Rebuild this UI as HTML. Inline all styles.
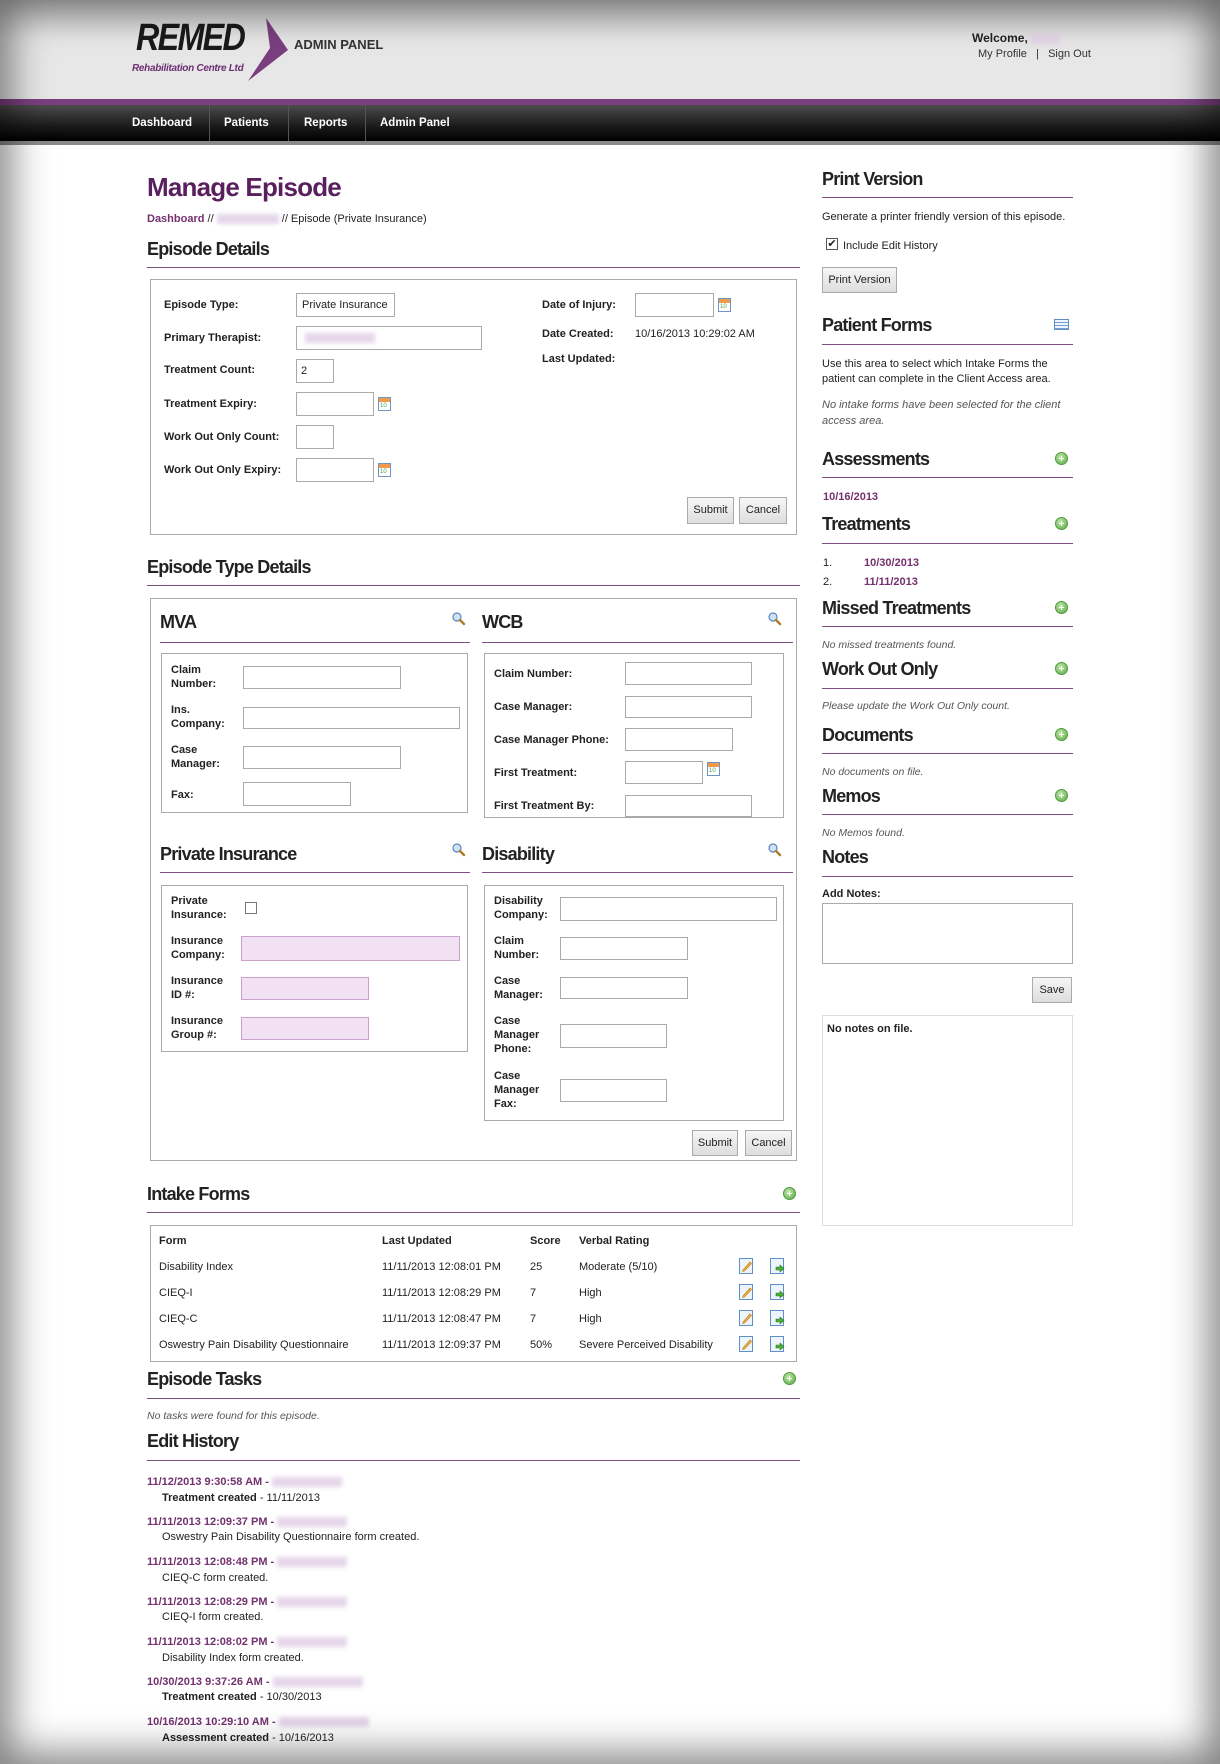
<!DOCTYPE html>
<html><head><meta charset="utf-8"><style>
*{margin:0;padding:0;box-sizing:border-box}
body{width:1220px;height:1764px;position:relative;overflow:hidden;background:#fff;font-family:"Liberation Sans",Arial,sans-serif;font-size:11px;color:#222}
.a{position:absolute}
.t{position:absolute;white-space:nowrap;line-height:14px}
.b{font-weight:bold}
.h{position:absolute;white-space:nowrap;font-family:"Liberation Sans",Arial,sans-serif;font-weight:bold;font-size:18px;letter-spacing:-0.8px;line-height:22px;color:#222}
.ln{position:absolute;height:1px;background:#7e4d82}
.in{position:absolute;border:1px solid #aaa;background:#fff}
.pk{background:#f2e1f2;border-color:#c8a2c8}
.box{position:absolute;border:1px solid #aaa}
.btn{position:absolute;border:1px solid #aaa;background:linear-gradient(#f6f6f6,#dedede);text-align:center;font-size:11px;line-height:24px}
.pu{color:#74306f;font-weight:bold}
.it{font-style:italic;color:#555}
.blur{display:inline-block;background:#e6d6ea;filter:blur(2px);height:10px;vertical-align:middle}
.plus{position:absolute;width:13px;height:13px;border-radius:50%;background:radial-gradient(circle at 40% 35%,#bfe7a8,#5aaa45);border:1px solid #4f9a3c}
.plus:before{content:"";position:absolute;left:3px;top:5px;width:5px;height:1px;background:#fff}
.plus:after{content:"";position:absolute;left:5px;top:3px;width:1px;height:5px;background:#fff}
.cal{position:absolute;width:13px;height:14px;border:1px solid #6f95c6;background:#fff}
.cal:before{content:"";position:absolute;left:0;top:0;right:0;height:4px;background:#f09a4a}
.cal:after{content:"10";position:absolute;left:1px;top:4px;font-size:6px;color:#4a9a4a;line-height:8px}
</style></head><body>
<!-- header -->
<div class="a" style="left:0;top:0;width:1220px;height:99px;background:linear-gradient(#d0d0d0,#e8e7e8 40%,#e8e7e8)"></div>
<div class="a" style="left:0;top:99px;width:1220px;height:6px;background:#7b3f80"></div>
<div class="a" style="left:0;top:105px;width:1220px;height:36px;background:linear-gradient(#4c4c4c,#1a1a1a 60%,#000)"></div>
<div class="a" style="left:0;top:141px;width:1220px;height:4px;background:#8a8a8a"></div>
<div class="t" style="left:136px;top:18px;font-family:'Liberation Sans',sans-serif;font-style:italic;font-weight:bold;font-size:38px;line-height:40px;letter-spacing:-2px;color:#1a1a1a;transform:scaleX(0.85);transform-origin:left">REMED</div>
<div class="t" style="left:132px;top:62px;font-family:'Liberation Sans',sans-serif;font-style:italic;font-weight:bold;font-size:10px;color:#6d2f72;letter-spacing:-0.3px">Rehabilitation Centre Ltd</div>
<svg class="a" style="left:248px;top:18px" width="42" height="64"><polygon points="18,0 40,32 0,63 22,30" fill="#7b3f80"/></svg>
<div class="t" style="left:294px;top:38px;font-family:'Liberation Sans',sans-serif;font-weight:bold;font-size:13px;color:#333">ADMIN PANEL</div>
<div class="t b" style="left:972px;top:31px;font-size:12px;color:#222">Welcome, <span class="blur" style="width:28px"></span></div>
<div class="t" style="left:978px;top:47px;font-size:11px;color:#333">My Profile &nbsp;&nbsp;|&nbsp;&nbsp; Sign Out</div>
<div class="t b" style="left:132px;top:116px;color:#fff;font-size:11.5px">Dashboard</div>
<div class="a" style="left:209px;top:105px;width:1px;height:36px;background:#555"></div>
<div class="t b" style="left:224px;top:116px;color:#fff;font-size:11.5px">Patients</div>
<div class="a" style="left:288px;top:105px;width:1px;height:36px;background:#555"></div>
<div class="t b" style="left:304px;top:116px;color:#fff;font-size:11.5px">Reports</div>
<div class="a" style="left:365px;top:105px;width:1px;height:36px;background:#555"></div>
<div class="t b" style="left:380px;top:116px;color:#fff;font-size:11.5px">Admin Panel</div>

<!-- left column -->
<div class="t" style="left:147px;top:171px;font-family:'Liberation Sans',sans-serif;font-weight:bold;font-size:26px;line-height:32px;letter-spacing:-0.8px;color:#5a1f5e">Manage Episode</div>
<div class="t" style="left:147px;top:212px"><span class="pu">Dashboard</span> // <span class="blur" style="width:62px"></span> // Episode (Private Insurance)</div>
<div class="h" style="left:147px;top:238px">Episode Details</div>
<div class="ln" style="left:147px;top:267px;width:653px"></div>
<div class="box" style="left:150px;top:279px;width:647px;height:256px"></div>
<div class="t b" style="left:164px;top:298px">Episode Type:</div>
<div class="in" style="left:296px;top:293px;width:99px;height:24px"></div><div class="t" style="left:302px;top:298px">Private Insurance</div>
<div class="t b" style="left:164px;top:331px">Primary Therapist:</div>
<div class="in" style="left:296px;top:326px;width:186px;height:24px"></div><span class="a blur" style="left:305px;top:333px;width:70px"></span>
<div class="t b" style="left:164px;top:363px">Treatment Count:</div>
<div class="in" style="left:296px;top:359px;width:38px;height:24px"></div><div class="t" style="left:301px;top:364px">2</div>
<div class="t b" style="left:164px;top:397px">Treatment Expiry:</div>
<div class="in" style="left:296px;top:392px;width:78px;height:24px"></div><div class="cal" style="left:378px;top:397px"></div>
<div class="t b" style="left:164px;top:430px">Work Out Only Count:</div>
<div class="in" style="left:296px;top:425px;width:38px;height:24px"></div>
<div class="t b" style="left:164px;top:463px">Work Out Only Expiry:</div>
<div class="in" style="left:296px;top:458px;width:78px;height:24px"></div><div class="cal" style="left:378px;top:463px"></div>
<div class="t b" style="left:542px;top:298px">Date of Injury:</div>
<div class="in" style="left:635px;top:293px;width:79px;height:24px"></div><div class="cal" style="left:718px;top:298px"></div>
<div class="t b" style="left:542px;top:327px">Date Created:</div>
<div class="t" style="left:635px;top:327px">10/16/2013 10:29:02 AM</div>
<div class="t b" style="left:542px;top:352px">Last Updated:</div>
<div class="btn" style="left:687px;top:497px;width:47px;height:27px">Submit</div>
<div class="btn" style="left:739px;top:497px;width:48px;height:27px">Cancel</div>

<div class="h" style="left:147px;top:556px">Episode Type Details</div>
<div class="ln" style="left:147px;top:585px;width:653px"></div>
<div class="box" style="left:150px;top:598px;width:647px;height:563px"></div>

<svg width="0" height="0" style="position:absolute"><defs><g id="mag"><circle cx="5" cy="5" r="4" fill="#cfe3f7" stroke="#5b86b8" stroke-width="1.2"/><line x1="8" y1="8" x2="12" y2="12" stroke="#b07a2a" stroke-width="2.4" stroke-linecap="round"/></g></defs></svg>
<div class="h" style="left:160px;top:611px">MVA</div>
<svg class="a" style="left:452px;top:612px" width="14" height="14"><use href="#mag"/></svg>
<div class="ln" style="left:160px;top:642px;width:310px"></div>
<div class="h" style="left:482px;top:611px">WCB</div>
<svg class="a" style="left:768px;top:612px" width="14" height="14"><use href="#mag"/></svg>
<div class="ln" style="left:482px;top:642px;width:311px"></div>
<div class="box" style="left:161px;top:653px;width:307px;height:160px"></div>
<div class="t b" style="left:171px;top:663px">Claim<br>Number:</div>
<div class="in" style="left:243px;top:666px;width:158px;height:23px"></div>
<div class="t b" style="left:171px;top:703px">Ins.<br>Company:</div>
<div class="in" style="left:243px;top:707px;width:217px;height:22px"></div>
<div class="t b" style="left:171px;top:743px">Case<br>Manager:</div>
<div class="in" style="left:243px;top:746px;width:158px;height:23px"></div>
<div class="t b" style="left:171px;top:788px">Fax:</div>
<div class="in" style="left:243px;top:782px;width:108px;height:24px"></div>
<div class="box" style="left:484px;top:653px;width:300px;height:165px"></div>
<div class="t b" style="left:494px;top:667px">Claim Number:</div>
<div class="in" style="left:625px;top:662px;width:127px;height:23px"></div>
<div class="t b" style="left:494px;top:700px">Case Manager:</div>
<div class="in" style="left:625px;top:696px;width:127px;height:22px"></div>
<div class="t b" style="left:494px;top:733px">Case Manager Phone:</div>
<div class="in" style="left:625px;top:728px;width:108px;height:23px"></div>
<div class="t b" style="left:494px;top:766px">First Treatment:</div>
<div class="in" style="left:625px;top:761px;width:78px;height:23px"></div><div class="cal" style="left:707px;top:762px"></div>
<div class="t b" style="left:494px;top:799px">First Treatment By:</div>
<div class="in" style="left:625px;top:795px;width:127px;height:22px"></div>

<div class="h" style="left:160px;top:843px">Private Insurance</div>
<svg class="a" style="left:452px;top:843px" width="14" height="14"><use href="#mag"/></svg>
<div class="ln" style="left:160px;top:872px;width:310px"></div>
<div class="h" style="left:482px;top:843px">Disability</div>
<svg class="a" style="left:768px;top:843px" width="14" height="14"><use href="#mag"/></svg>
<div class="ln" style="left:482px;top:872px;width:311px"></div>
<div class="box" style="left:161px;top:885px;width:307px;height:167px"></div>
<div class="t b" style="left:171px;top:894px">Private<br>Insurance:</div>
<div class="in" style="left:245px;top:902px;width:12px;height:12px;border-color:#777"></div>
<div class="t b" style="left:171px;top:934px">Insurance<br>Company:</div>
<div class="in pk" style="left:241px;top:936px;width:219px;height:25px"></div>
<div class="t b" style="left:171px;top:974px">Insurance<br>ID #:</div>
<div class="in pk" style="left:241px;top:977px;width:128px;height:23px"></div>
<div class="t b" style="left:171px;top:1014px">Insurance<br>Group #:</div>
<div class="in pk" style="left:241px;top:1017px;width:128px;height:23px"></div>
<div class="box" style="left:484px;top:885px;width:300px;height:236px"></div>
<div class="t b" style="left:494px;top:894px">Disability<br>Company:</div>
<div class="in" style="left:560px;top:897px;width:217px;height:24px"></div>
<div class="t b" style="left:494px;top:934px">Claim<br>Number:</div>
<div class="in" style="left:560px;top:937px;width:128px;height:23px"></div>
<div class="t b" style="left:494px;top:974px">Case<br>Manager:</div>
<div class="in" style="left:560px;top:977px;width:128px;height:22px"></div>
<div class="t b" style="left:494px;top:1014px">Case<br>Manager<br>Phone:</div>
<div class="in" style="left:560px;top:1024px;width:107px;height:24px"></div>
<div class="t b" style="left:494px;top:1069px">Case<br>Manager<br>Fax:</div>
<div class="in" style="left:560px;top:1079px;width:107px;height:23px"></div>
<div class="btn" style="left:692px;top:1130px;width:46px;height:26px">Submit</div>
<div class="btn" style="left:745px;top:1130px;width:47px;height:26px">Cancel</div>

<div class="h" style="left:147px;top:1183px">Intake Forms</div>
<div class="plus" style="left:783px;top:1187px"></div>
<div class="ln" style="left:147px;top:1212px;width:653px"></div>
<div class="box" style="left:150px;top:1225px;width:647px;height:137px"></div>
<div class="t b" style="left:159px;top:1234px">Form</div><div class="t b" style="left:382px;top:1234px">Last Updated</div><div class="t b" style="left:530px;top:1234px">Score</div><div class="t b" style="left:579px;top:1234px">Verbal Rating</div>
<div class="t" style="left:159px;top:1260px">Disability Index</div><div class="t" style="left:382px;top:1260px">11/11/2013 12:08:01 PM</div><div class="t" style="left:530px;top:1260px">25</div><div class="t" style="left:579px;top:1260px">Moderate (5/10)</div>
<div class="t" style="left:159px;top:1286px">CIEQ-I</div><div class="t" style="left:382px;top:1286px">11/11/2013 12:08:29 PM</div><div class="t" style="left:530px;top:1286px">7</div><div class="t" style="left:579px;top:1286px">High</div>
<div class="t" style="left:159px;top:1312px">CIEQ-C</div><div class="t" style="left:382px;top:1312px">11/11/2013 12:08:47 PM</div><div class="t" style="left:530px;top:1312px">7</div><div class="t" style="left:579px;top:1312px">High</div>
<div class="t" style="left:159px;top:1338px">Oswestry Pain Disability Questionnaire</div><div class="t" style="left:382px;top:1338px">11/11/2013 12:09:37 PM</div><div class="t" style="left:530px;top:1338px">50%</div><div class="t" style="left:579px;top:1338px">Severe Perceived Disability</div>
<svg width="0" height="0" style="position:absolute"><defs>
<g id="ed"><rect x="0.5" y="0.5" width="13" height="15" fill="#eef4fb" stroke="#5f8fc4"/><path d="M4 12 L11 4 L12.5 5.5 L5.5 13 L3.5 13.5 Z" fill="#f2b53a" stroke="#b87c18" stroke-width="0.6"/></g>
<g id="dc"><rect x="0.5" y="0.5" width="13" height="15" fill="#eef4fb" stroke="#5f8fc4"/><path d="M6 9 H10 V7 L14 10.5 L10 14 V12 H6 Z" fill="#4cae3b" stroke="#2e7a22" stroke-width="0.6"/></g></defs></svg>
<svg class="a" style="left:739px;top:1258px" width="15" height="17"><use href="#ed"/></svg><svg class="a" style="left:770px;top:1258px" width="16" height="17"><use href="#dc"/></svg>
<svg class="a" style="left:739px;top:1284px" width="15" height="17"><use href="#ed"/></svg><svg class="a" style="left:770px;top:1284px" width="16" height="17"><use href="#dc"/></svg>
<svg class="a" style="left:739px;top:1310px" width="15" height="17"><use href="#ed"/></svg><svg class="a" style="left:770px;top:1310px" width="16" height="17"><use href="#dc"/></svg>
<svg class="a" style="left:739px;top:1336px" width="15" height="17"><use href="#ed"/></svg><svg class="a" style="left:770px;top:1336px" width="16" height="17"><use href="#dc"/></svg>

<div class="h" style="left:147px;top:1368px">Episode Tasks</div>
<div class="plus" style="left:783px;top:1372px"></div>
<div class="ln" style="left:147px;top:1398px;width:653px"></div>
<div class="t it" style="left:147px;top:1409px;font-size:10.5px">No tasks were found for this episode.</div>
<div class="h" style="left:147px;top:1430px">Edit History</div>
<div class="ln" style="left:147px;top:1460px;width:653px"></div>
<div class="t pu" style="left:147px;top:1475px">11/12/2013 9:30:58 AM - <span class="blur" style="width:70px"></span></div>
<div class="t" style="left:162px;top:1491px"><b>Treatment created</b> - 11/11/2013</div>
<div class="t pu" style="left:147px;top:1515px">11/11/2013 12:09:37 PM - <span class="blur" style="width:70px"></span></div>
<div class="t" style="left:162px;top:1530px">Oswestry Pain Disability Questionnaire form created.</div>
<div class="t pu" style="left:147px;top:1555px">11/11/2013 12:08:48 PM - <span class="blur" style="width:70px"></span></div>
<div class="t" style="left:162px;top:1571px">CIEQ-C form created.</div>
<div class="t pu" style="left:147px;top:1595px">11/11/2013 12:08:29 PM - <span class="blur" style="width:70px"></span></div>
<div class="t" style="left:162px;top:1610px">CIEQ-I form created.</div>
<div class="t pu" style="left:147px;top:1635px">11/11/2013 12:08:02 PM - <span class="blur" style="width:70px"></span></div>
<div class="t" style="left:162px;top:1651px">Disability Index form created.</div>
<div class="t pu" style="left:147px;top:1675px">10/30/2013 9:37:26 AM - <span class="blur" style="width:90px"></span></div>
<div class="t" style="left:162px;top:1690px"><b>Treatment created</b> - 10/30/2013</div>
<div class="t pu" style="left:147px;top:1715px">10/16/2013 10:29:10 AM - <span class="blur" style="width:90px"></span></div>
<div class="t" style="left:162px;top:1731px"><b>Assessment created</b> - 10/16/2013</div>

<!-- right column -->
<div class="h" style="left:822px;top:168px">Print Version</div>
<div class="ln" style="left:822px;top:197px;width:251px"></div>
<div class="t" style="left:822px;top:210px">Generate a printer friendly version of this episode.</div>
<div class="in" style="left:826px;top:238px;width:12px;height:12px;border-color:#555;font-size:11px;line-height:10px;text-align:center">✔</div>
<div class="t" style="left:843px;top:239px">Include Edit History</div>
<div class="btn" style="left:822px;top:267px;width:75px;height:26px">Print Version</div>
<div class="h" style="left:822px;top:314px">Patient Forms</div>
<div class="a" style="left:1054px;top:319px;width:15px;height:11px;border:1px solid #5f8fc4;background:repeating-linear-gradient(#eef4fb 0 2px,#7aa0d0 2px 3px)"></div>
<div class="ln" style="left:822px;top:344px;width:251px"></div>
<div class="t" style="left:822px;top:357px;line-height:15px">Use this area to select which Intake Forms the<br>patient can complete in the Client Access area.</div>
<div class="t it" style="left:822px;top:397px;line-height:16px">No intake forms have been selected for the client<br>access area.</div>
<div class="h" style="left:822px;top:448px">Assessments</div><div class="plus" style="left:1055px;top:452px"></div>
<div class="ln" style="left:822px;top:477px;width:251px"></div>
<div class="t pu" style="left:823px;top:490px">10/16/2013</div>
<div class="h" style="left:822px;top:513px">Treatments</div><div class="plus" style="left:1055px;top:517px"></div>
<div class="ln" style="left:822px;top:543px;width:251px"></div>
<div class="t" style="left:823px;top:556px">1.</div><div class="t pu" style="left:864px;top:556px">10/30/2013</div>
<div class="t" style="left:823px;top:575px">2.</div><div class="t pu" style="left:864px;top:575px">11/11/2013</div>
<div class="h" style="left:822px;top:597px">Missed Treatments</div><div class="plus" style="left:1055px;top:601px"></div>
<div class="ln" style="left:822px;top:626px;width:251px"></div>
<div class="t it" style="left:822px;top:638px;font-size:10.5px">No missed treatments found.</div>
<div class="h" style="left:822px;top:658px">Work Out Only</div><div class="plus" style="left:1055px;top:662px"></div>
<div class="ln" style="left:822px;top:688px;width:251px"></div>
<div class="t it" style="left:822px;top:699px;font-size:10.5px">Please update the Work Out Only count.</div>
<div class="h" style="left:822px;top:724px">Documents</div><div class="plus" style="left:1055px;top:728px"></div>
<div class="ln" style="left:822px;top:753px;width:251px"></div>
<div class="t it" style="left:822px;top:765px;font-size:10.5px">No documents on file.</div>
<div class="h" style="left:822px;top:785px">Memos</div><div class="plus" style="left:1055px;top:789px"></div>
<div class="ln" style="left:822px;top:814px;width:251px"></div>
<div class="t it" style="left:822px;top:826px;font-size:10.5px">No Memos found.</div>
<div class="h" style="left:822px;top:846px">Notes</div>
<div class="ln" style="left:822px;top:876px;width:251px"></div>
<div class="t b" style="left:822px;top:887px">Add Notes:</div>
<div class="in" style="left:822px;top:903px;width:251px;height:61px"></div>
<div class="btn" style="left:1032px;top:977px;width:40px;height:26px">Save</div>
<div class="a" style="left:822px;top:1015px;width:251px;height:211px;border:1px solid #ddd"></div>
<div class="t b" style="left:827px;top:1022px">No notes on file.</div>

<!-- vignette -->
<div class="a" style="left:0;top:0;width:1220px;height:1764px;box-shadow:inset 0 0 40px 10px rgba(0,0,0,0.5);pointer-events:none"></div>
</body></html>
